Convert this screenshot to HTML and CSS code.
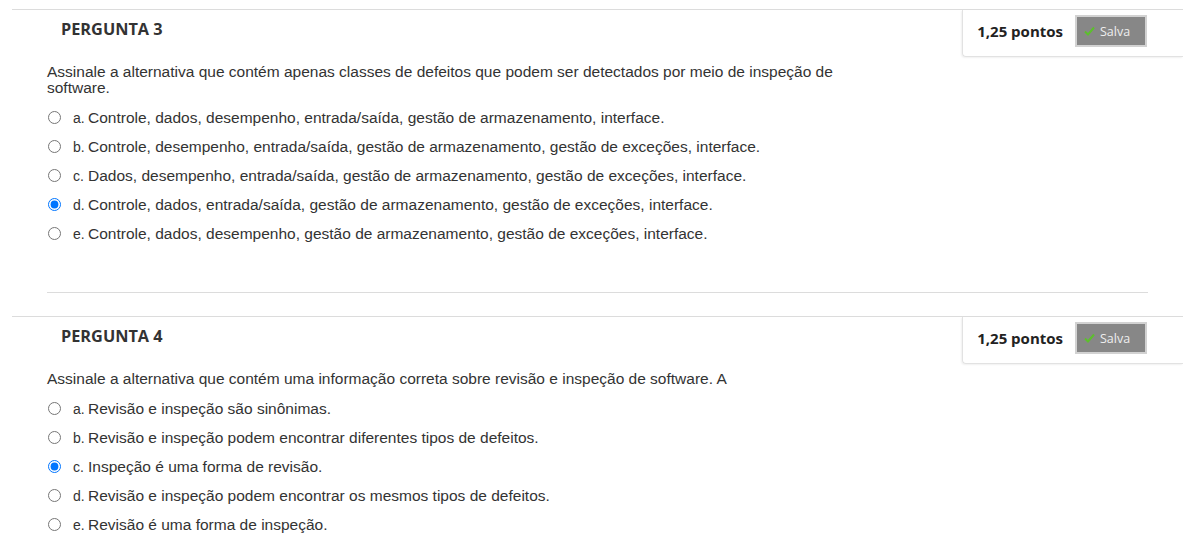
FILE: index.html
```html
<!DOCTYPE html>
<html lang="pt-BR">
<head>
    <meta charset="UTF-8">
    <title>Teste - Perguntas</title>
    <link rel="stylesheet" href="styles.css">
</head>
<body>

<div class="question">
    <div class="question-header">
        <h3>PERGUNTA 3</h3>
        <div class="points">
            <span class="score">1,25 pontos</span>
            <span class="saved">
                <svg width="11" height="10" viewBox="0 0 11 10"><path d="M1 5.5 L4 8.5 L10 1.5" fill="none" stroke="#5cc02c" stroke-width="2"/></svg>
                Salva
            </span>
        </div>
    </div>
    <div class="question-body">
        <p class="question-text">Assinale a alternativa que contém apenas classes de defeitos que podem ser detectados por meio de inspeção de software.</p>
        <ul class="options">
            <li><input type="radio" name="q3"><label><span class="letter">a.</span>Controle, dados, desempenho, entrada/saída, gestão de armazenamento, interface.</label></li>
            <li><input type="radio" name="q3"><label><span class="letter">b.</span>Controle, desempenho, entrada/saída, gestão de armazenamento, gestão de exceções, interface.</label></li>
            <li><input type="radio" name="q3"><label><span class="letter">c.</span>Dados, desempenho, entrada/saída, gestão de armazenamento, gestão de exceções, interface.</label></li>
            <li><input type="radio" name="q3" checked><label><span class="letter">d.</span>Controle, dados, entrada/saída, gestão de armazenamento, gestão de exceções, interface.</label></li>
            <li><input type="radio" name="q3"><label><span class="letter">e.</span>Controle, dados, desempenho, gestão de armazenamento, gestão de exceções, interface.</label></li>
        </ul>
    </div>
    <hr class="separator">
</div>

<div class="question">
    <div class="question-header">
        <h3>PERGUNTA 4</h3>
        <div class="points">
            <span class="score">1,25 pontos</span>
            <span class="saved">
                <svg width="11" height="10" viewBox="0 0 11 10"><path d="M1 5.5 L4 8.5 L10 1.5" fill="none" stroke="#5cc02c" stroke-width="2"/></svg>
                Salva
            </span>
        </div>
    </div>
    <div class="question-body">
        <p class="question-text">Assinale a alternativa que contém uma informação correta sobre revisão e inspeção de software. A</p>
        <ul class="options">
            <li><input type="radio" name="q4"><label><span class="letter">a.</span>Revisão e inspeção são sinônimas.</label></li>
            <li><input type="radio" name="q4"><label><span class="letter">b.</span>Revisão e inspeção podem encontrar diferentes tipos de defeitos.</label></li>
            <li><input type="radio" name="q4" checked><label><span class="letter">c.</span>Inspeção é uma forma de revisão.</label></li>
            <li><input type="radio" name="q4"><label><span class="letter">d.</span>Revisão e inspeção podem encontrar os mesmos tipos de defeitos.</label></li>
            <li><input type="radio" name="q4"><label><span class="letter">e.</span>Revisão é uma forma de inspeção.</label></li>
        </ul>
    </div>
    <hr class="separator">
</div>

</body>
</html>
```

FILE: styles.css
```css
body {
    margin: 0;
    padding-top: 9px;
    background-color: #ffffff;
    font-family: "Liberation Sans", Arial, sans-serif;
    color: #333;
    overflow: hidden;
}
.question {
    margin-left: 12px;
    width: 1171px;
    border-top: 1px solid #dcdcdc;
    margin-bottom: 23px;
}
.question-header {
    display: flex;
    justify-content: space-between;
    align-items: flex-start;
}
.question-header h3 {
    margin: 0;
    padding: 9px 0 0 49px;
    font-family: "Open Sans", sans-serif;
    font-size: 16.3px;
    line-height: 20px;
    font-weight: 700;
    color: #333;
}
.points {
    display: flex;
    align-items: center;
    padding: 5px 36px 9px 14px;
    border-left: 1px solid #e2e2e2;
    border-bottom: 1px solid #e2e2e2;
    border-bottom-left-radius: 4px;
    box-shadow: -1px 1px 2px rgba(0, 0, 0, 0.06);
}
.score {
    font-family: "Open Sans", sans-serif;
    font-size: 15px;
    font-weight: 700;
    color: #222;
    margin-right: 12px;
}
.saved {
    display: flex;
    align-items: center;
    box-sizing: border-box;
    width: 72px;
    height: 32px;
    padding-left: 7px;
    background-color: #878787;
    border: 2px solid #d2d2d2;
    font-family: "Open Sans", sans-serif;
    font-size: 12.5px;
    color: #eeeeee;
}
.saved svg {
    margin-right: 5px;
}
.question-body {
    padding: 0 35px;
}
.question-text {
    margin: 7px 0 7px 0;
    max-width: 810px;
    font-size: 15.5px;
    line-height: 16px;
}
.options {
    list-style: none;
    margin: 0;
    padding: 0;
}
.options li {
    display: flex;
    align-items: center;
    height: 29px;
    font-size: 15.5px;
}
.options input {
    width: 13px;
    height: 13px;
    margin: 0 12px 0 1px;
}
.letter {
    display: inline-block;
    width: 15px;
    font-size: 14px;
}
.separator {
    margin: 44px 35px 0 35px;
    border: none;
    border-top: 1px solid #dcdcdc;
}
```
